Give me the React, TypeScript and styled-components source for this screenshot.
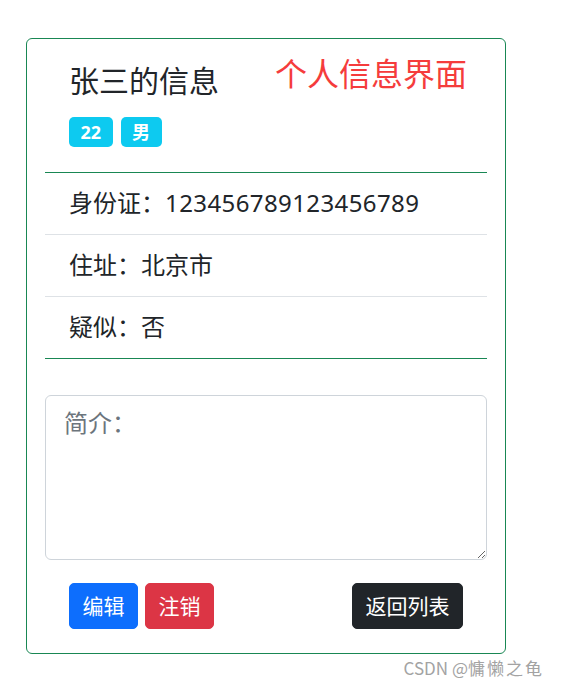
import React from "react";
import styled, { createGlobalStyle } from "styled-components";

const GlobalStyle = createGlobalStyle`
  html, body { margin: 0; padding: 0; background: #fff; }
  body {
    font-family: "Noto Sans", "Noto Sans CJK SC", sans-serif;
    color: #212529;
  }
  * { box-sizing: border-box; }
`;

const Page = styled.div`
  padding: 38px 0 0 26px;
  width: 562px;
`;

const Card = styled.div`
  width: 480px;
  border: 1px solid #198754;
  border-radius: 6px;
  padding: 0 18px 24px;
  background: #fff;
`;

const Header = styled.div`
  position: relative;
  padding: 24px 24px 25px;
`;

const Title = styled.h5`
  margin: 0;
  font-family: "Noto Sans", "Noto Sans CJK SC", sans-serif;
  font-size: 30px;
  font-weight: 400;
  line-height: 36px;
  color: #212529;
`;

const Badges = styled.div`
  display: flex;
  gap: 8px;
  margin-top: 18px;
`;

const Badge = styled.span`
  display: inline-block;
  background: #0dcaf0;
  color: #fff;
  font-family: "Noto Sans", "Noto Sans CJK SC", sans-serif;
  font-weight: 700;
  font-size: 18px;
  line-height: 18px;
  padding: 6px 11.5px;
  border-radius: 5px;
`;

const Annotation = styled.div`
  position: absolute;
  top: 14px;
  right: 20px;
  color: #f53c3c;
  font-family: "Noto Sans CJK SC", sans-serif;
  font-size: 32px;
  line-height: 38px;
`;

const List = styled.ul`
  list-style: none;
  margin: 0;
  padding: 0;
  border-top: 1px solid #198754;
  border-bottom: 1px solid #198754;
`;

const Item = styled.li`
  padding: 12px 24px 13px;
  font-size: 24px;
  line-height: 36px;
  color: #212529;
  & + & {
    border-top: 1px solid #dee2e6;
  }
`;

const Digits = styled.span`
  letter-spacing: 0.4px;
`;

const Intro = styled.textarea`
  display: block;
  width: 100%;
  height: 165px;
  margin-top: 36px;
  padding: 9px 18px;
  font-family: "Noto Sans", "Noto Sans CJK SC", sans-serif;
  font-size: 24px;
  line-height: 36px;
  color: #212529;
  border: 1px solid #ced4da;
  border-radius: 6px;
  outline: none;
  &::placeholder {
    color: #6c757d;
  }
`;

const Actions = styled.div`
  display: flex;
  justify-content: space-between;
  align-items: center;
  margin-top: 23px;
  padding: 0 24px;
`;

const Group = styled.div`
  display: flex;
  gap: 7px;
`;

const Button = styled.button<{ $bg: string }>`
  background: ${(p) => p.$bg};
  border: 1px solid ${(p) => p.$bg};
  color: #fff;
  font-family: "Noto Sans", "Noto Sans CJK SC", sans-serif;
  font-size: 21px;
  line-height: 32px;
  padding: 6px 12.5px;
  border-radius: 5px;
  cursor: pointer;
`;

const Watermark = styled.div`
  width: 518px;
  text-align: right;
  margin-top: 1px;
  font-family: "Noto Sans CJK SC", sans-serif;
  font-size: 17px;
  line-height: 26px;
  color: #a3a3a3;
`;

const WatermarkName = styled.span`
  letter-spacing: 2px;
`;

export default function App() {
  return (
    <>
      <GlobalStyle />
      <Page>
        <Card>
          <Header>
            <Title>张三的信息</Title>
            <Badges>
              <Badge>22</Badge>
              <Badge>男</Badge>
            </Badges>
            <Annotation>个人信息界面</Annotation>
          </Header>
          <List>
            <Item>
              身份证：<Digits>123456789123456789</Digits>
            </Item>
            <Item>住址：北京市</Item>
            <Item>疑似：否</Item>
          </List>
          <Intro placeholder="简介：" />
          <Actions>
            <Group>
              <Button $bg="#0d6efd">编辑</Button>
              <Button $bg="#dc3545">注销</Button>
            </Group>
            <Button $bg="#212529">返回列表</Button>
          </Actions>
        </Card>
        <Watermark>
          CSDN @<WatermarkName>慵懒之龟</WatermarkName>
        </Watermark>
      </Page>
    </>
  );
}
